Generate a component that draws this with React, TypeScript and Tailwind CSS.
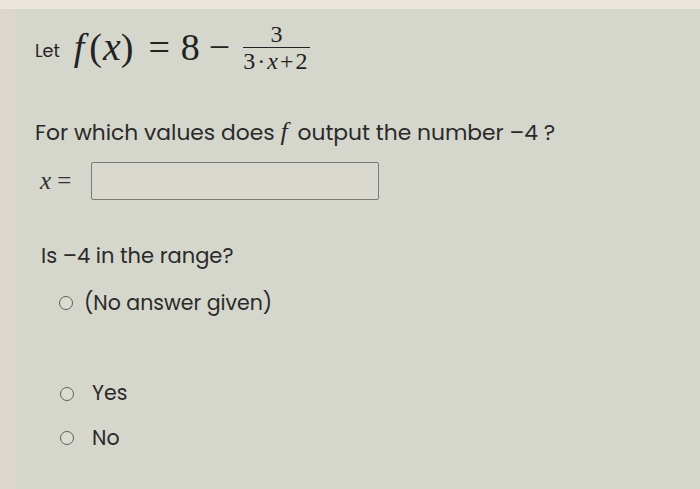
import React from "react"

const sans = "font-['Poppins','Inter','Liberation_Sans',sans-serif]"
const serif = "font-['Liberation_Serif','Times_New_Roman',serif]"

const Radio = ({ label, className }: { label: string; className?: string }) => (
  <label className={`flex items-center gap-[11px] text-[20.5px] text-[#2a2a2a] ${className ?? ""}`}>
    <span className="block h-[14px] w-[14px] rounded-full border-[1.5px] border-[#5e5e5b] bg-[#dcdcd3]" />
    <span>{label}</span>
  </label>
)

const App = () => {
  return (
    <div className={`flex h-[489px] w-[700px] flex-col overflow-hidden bg-[#e8e3da] ${sans}`}>
      <div className="h-[9px] shrink-0 bg-[#ebe5dc]" />
      <div className="flex flex-1">
        <div className="w-[15px] shrink-0 bg-[#dbd7cd]" />
        <div className="flex-1 bg-[#d5d6cc] pl-[20px] pt-[13px]">
          {/* function definition */}
          <div className="flex h-[50px] items-center text-[#222]">
            <span className="mr-[14px] mt-[8px] text-[17.5px]">Let</span>
            <span className={`${serif} text-[38px] italic`}>f</span>
            <span className={`${serif} ml-[5px] text-[38px]`}>(</span>
            <span className={`${serif} pl-[1px] text-[40px] italic`}>x</span>
            <span className={`${serif} text-[38px]`}>)</span>
            <span className={`${serif} ml-[15px] mr-[11px] text-[38px]`}>=</span>
            <span className={`${serif} text-[38px]`}>8</span>
            <span className={`${serif} ml-[9px] mr-[11px] text-[38px]`}>−</span>
            <span className={`${serif} mt-[1px] flex flex-col items-center px-[2px] text-[24px] leading-[22px]`}>
              <span className="px-[4px]">3</span>
              <span className="my-[2px] block h-[1.5px] w-full bg-[#222]" />
              <span className="tracking-[2px]">
                3·<span className="italic">x</span>+2
              </span>
            </span>
          </div>

          {/* question */}
          <p className="mt-[40px] text-[21.8px] text-[#2a2a2a]">
            For which values does <span className={`${serif} mr-[4px] text-[26px] italic`}>f</span> output
            the number –4 ?
          </p>
          <div className="mt-[11px] flex items-center">
            <span className={`${serif} ml-[5px] w-[51px] text-[25px] text-[#333]`}>
              <span className="italic">x</span> =
            </span>
            <div className="h-[38px] w-[288px] rounded-[2px] border border-[#7a7a76] bg-[#dad9d0]" />
          </div>

          {/* range */}
          <p className="mt-[40px] ml-[6px] text-[21px] text-[#2a2a2a]">Is –4 in the range?</p>
          <Radio label="(No answer given)" className="ml-[24px] mt-[16px]" />
          <Radio label="Yes" className="ml-[25px] mt-[60px] gap-[18px] text-[19px]" />
          <Radio label="No" className="ml-[25px] mt-[14px] gap-[18px] text-[19px]" />
        </div>
      </div>
    </div>
  )
}

export default App
